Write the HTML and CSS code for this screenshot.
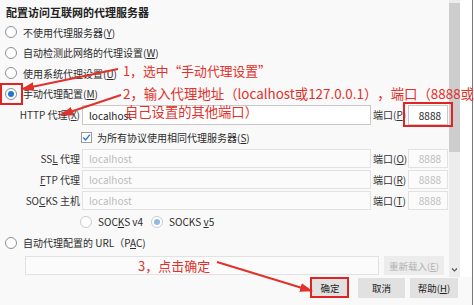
FILE: index.html
```html
<!DOCTYPE html>
<html lang="zh-CN">

<head>
    <meta name="viewport" content="width=device-width, initial-scale=1">
    <title>连接设置</title>
    <link rel="stylesheet" href="styles.css">
</head>

<body>
    <div class="window">
        <div class="scroller">
            <div class="pane">
                <div class="title">配置访问互联网的代理服务器</div>

                <label class="option"><span class="radio"></span><span>不使用代理服务器(<u>Y</u>)</span></label>
                <label class="option"><span class="radio"></span><span>自动检测此网络的代理设置(<u>W</u>)</span></label>
                <label class="option"><span class="radio"></span><span>使用系统代理设置(<u>U</u>)</span></label>
                <label class="option"><span class="radio checked"></span><span>手动代理配置(<u>M</u>)</span></label>

                <div class="proxy-grid">
                    <span class="field-label first">HTTP 代理(<u>X</u>)</span>
                    <input class="input tall" type="text" value="localhost">
                    <span class="port-label first">端口(<u>P</u>)</span>
                    <input class="input tall port" type="text" value="8888">

                    <label class="same-proxy">
                        <span class="checkbox">
                            <svg width="9" height="9" viewBox="0 0 9 9"><path d="M1.2 4.6 L3.6 7 L7.9 1.6" fill="none" stroke="#2a78d0" stroke-width="1.4"/></svg>
                        </span>
                        <span>为所有协议使用相同代理服务器(<u>S</u>)</span>
                    </label>

                    <span class="field-label">SS<u>L</u> 代理</span>
                    <input class="input" type="text" value="localhost" disabled>
                    <span class="port-label">端口(<u>O</u>)</span>
                    <input class="input port" type="text" value="8888" disabled>

                    <span class="field-label"><u>F</u>TP 代理</span>
                    <input class="input" type="text" value="localhost" disabled>
                    <span class="port-label">端口(<u>R</u>)</span>
                    <input class="input port" type="text" value="8888" disabled>

                    <span class="field-label">SO<u>C</u>KS 主机</span>
                    <input class="input" type="text" value="localhost" disabled>
                    <span class="port-label">端口(<u>T</u>)</span>
                    <input class="input port" type="text" value="8888" disabled>
                </div>

                <div class="socks-version">
                    <label class="option small"><span class="radio dim"></span><span>SOC<u>K</u>S v4</span></label>
                    <label class="option small v5"><span class="radio dim checked"></span><span>SOCKS <u>v</u>5</span></label>
                </div>

                <label class="option pac"><span class="radio"></span><span>自动代理配置的 URL（P<u>A</u>C)</span></label>

                <div class="pac-row">
                    <input class="input pac-url" type="text" value="" disabled>
                    <button class="btn reload" disabled>重新载入(<u>E</u>)</button>
                </div>
            </div>

            <div class="scrollbar">
                <div class="thumb"></div>
                <svg class="chevron" width="11" height="8" viewBox="0 0 11 8"><path d="M3 2.5 L5.5 5 L8 2.5" fill="none" stroke="#555" stroke-width="1.1"/></svg>
            </div>
            <div class="gutter"></div>
        </div>

        <div class="actions">
            <button class="btn ok">确定</button>
            <button class="btn cancel">取消</button>
            <button class="btn help">帮助(<u>H</u>)</button>
        </div>
    </div>

    <!-- 标注层 -->
    <div class="notes">
        <svg class="marks" width="474" height="305" viewBox="0 0 474 305">
            <defs>
                <marker id="head" markerWidth="13" markerHeight="9" refX="12" refY="4.5" orient="auto" markerUnits="userSpaceOnUse">
                    <path d="M0 0 L13 4.5 L0 9 Z" fill="#e2302a"/>
                </marker>
            </defs>
            <line x1="118" y1="69" x2="22" y2="89" stroke="#e2302a" stroke-width="2" marker-end="url(#head)"/>
            <line x1="121" y1="95" x2="61" y2="115" stroke="#e2302a" stroke-width="2" marker-end="url(#head)"/>
            <line x1="217" y1="262" x2="312" y2="291" stroke="#e2302a" stroke-width="2" marker-end="url(#head)"/>
            <rect x="1" y="84" width="21" height="20" fill="none" stroke="#e02424" stroke-width="2"/>
            <rect x="404" y="103" width="48" height="23" fill="none" stroke="#e02424" stroke-width="2"/>
            <rect x="311" y="278" width="37" height="19" fill="none" stroke="#e02424" stroke-width="2"/>
        </svg>
        <div class="note note-1">1，选中“手动代理设置”</div>
        <div class="note note-2">2，输入代理地址（localhost或127.0.0.1），端口（8888或</div>
        <div class="note note-3">自己设置的其他端口）</div>
        <div class="note note-4">3，点击确定</div>
    </div>
</body>

</html>
```

FILE: styles.css
```css
:root {
    --bg-color: #f9f9f9;
    --text-color: #2b2b2b;
    --border: #c9c9c9;
    --border-dim: #e2e2e2;
    --blue: #1c76d2;
    --note-red: #e2302a;
}

body {
    margin: 0;
    background-color: #ffffff;
    color: var(--text-color);
    font-family: "Noto Sans CJK SC", "Noto Sans", sans-serif;
    font-size: 10px;
}

u {
    text-decoration-thickness: 1px;
    text-underline-offset: 1px;
}

.window {
    position: relative;
    width: 472px;
    height: 305px;
    border-right: 1px solid #7a7a7a;
    background-color: var(--bg-color);
    display: flex;
    flex-direction: column;
}

.scroller {
    display: flex;
    height: 277px;
}

.pane {
    width: 449px;
    box-sizing: border-box;
    padding-left: 5px;
}

.title {
    height: 22px;
    line-height: 24px;
    padding-left: 1px;
    font-size: 11px;
    font-weight: bold;
    color: #222;
}

.option {
    display: flex;
    align-items: center;
    gap: 6px;
    height: 20.5px;
    white-space: nowrap;
}

.radio {
    flex: none;
    width: 12px;
    height: 12px;
    box-sizing: border-box;
    border: 1px solid #8f8f8f;
    border-radius: 50%;
    background-color: #ffffff;
    display: grid;
    place-items: center;
}

.radio.checked::after {
    content: "";
    width: 6px;
    height: 6px;
    border-radius: 50%;
    background-color: var(--blue);
}

.radio.dim {
    border-color: #cbcbcb;
}

.radio.dim.checked::after {
    background-color: #93b9e0;
}

.proxy-grid {
    display: grid;
    grid-template-columns: 75px 289px 33px 40px;
    grid-template-rows: 20px 24px 21px 21px 21px;
    column-gap: 2px;
    align-items: start;
    margin-top: 1px;
}

.field-label,
.port-label {
    line-height: 19px;
    white-space: nowrap;
    color: #333;
}

.field-label {
    text-align: right;
}

.field-label.first,
.port-label.first {
    line-height: 20px;
}

.input {
    width: 100%;
    height: 19px;
    box-sizing: border-box;
    margin: 0;
    padding: 0 6px;
    border: 1px solid var(--border);
    border-radius: 0;
    background-color: #ffffff;
    font-family: inherit;
    font-size: 10px;
    color: #222;
    outline: none;
}

.input.tall {
    height: 20px;
}

.input:disabled {
    background-color: #fbfbfb;
    border-color: var(--border-dim);
    color: #bcbcbc;
}

.port {
    text-align: right;
}

.same-proxy {
    grid-column: 2 / 5;
    display: flex;
    align-items: center;
    gap: 5px;
    height: 24px;
    margin-left: -1px;
    white-space: nowrap;
}

.checkbox {
    width: 11px;
    height: 11px;
    box-sizing: border-box;
    border: 1px solid #9a9a9a;
    background-color: #ffffff;
    display: grid;
    place-items: center;
}

.checkbox svg {
    display: block;
}

.socks-version {
    display: flex;
    height: 19px;
    padding-left: 75px;
}

.option.small {
    height: 19px;
}

.option.v5 {
    margin-left: 8px;
}

.option.pac {
    height: 23px;
}

.pac-row {
    display: flex;
    gap: 5px;
    margin-top: 2px;
    padding-left: 20px;
}

.pac-url {
    width: 354px;
}

.btn {
    height: 20px;
    padding: 0;
    border: none;
    border-radius: 0;
    background-color: #e1e1e1;
    font-family: inherit;
    font-size: 9.5px;
    color: #222;
}

.btn.reload {
    width: 60px;
    height: 19px;
    background-color: #ececec;
    color: #b3b3b3;
}

.scrollbar {
    width: 11px;
    background-color: #ececec;
    display: flex;
    flex-direction: column;
    justify-content: space-between;
}

.thumb {
    margin-top: 3px;
    height: 149px;
    background-color: #cdcdcd;
}

.chevron {
    display: block;
    margin-bottom: 3px;
}

.gutter {
    width: 12px;
    background-color: #ffffff;
}

.actions {
    display: flex;
    justify-content: flex-end;
    padding-right: 14px;
    margin-top: 1px;
}

.btn.ok {
    width: 38px;
}

.btn.cancel {
    width: 47px;
    margin-left: 9px;
}

.btn.help {
    width: 48px;
    margin-left: 5px;
}

/* 标注 */
.notes {
    position: absolute;
    inset: 0;
    pointer-events: none;
}

.marks {
    position: absolute;
    left: 0;
    top: 0;
}

.note {
    position: absolute;
    font-size: 13.3px;
    line-height: 15px;
    color: var(--note-red);
    white-space: nowrap;
    text-spacing-trim: space-all;
}

.note-1 {
    left: 123px;
    top: 63px;
    font-size: 12.8px;
}

.note-2 {
    left: 123px;
    top: 86px;
    font-size: 13.4px;
}

.note-3 {
    left: 125px;
    top: 103.5px;
}

.note-4 {
    left: 138px;
    top: 258px;
    font-size: 13px;
}
```
